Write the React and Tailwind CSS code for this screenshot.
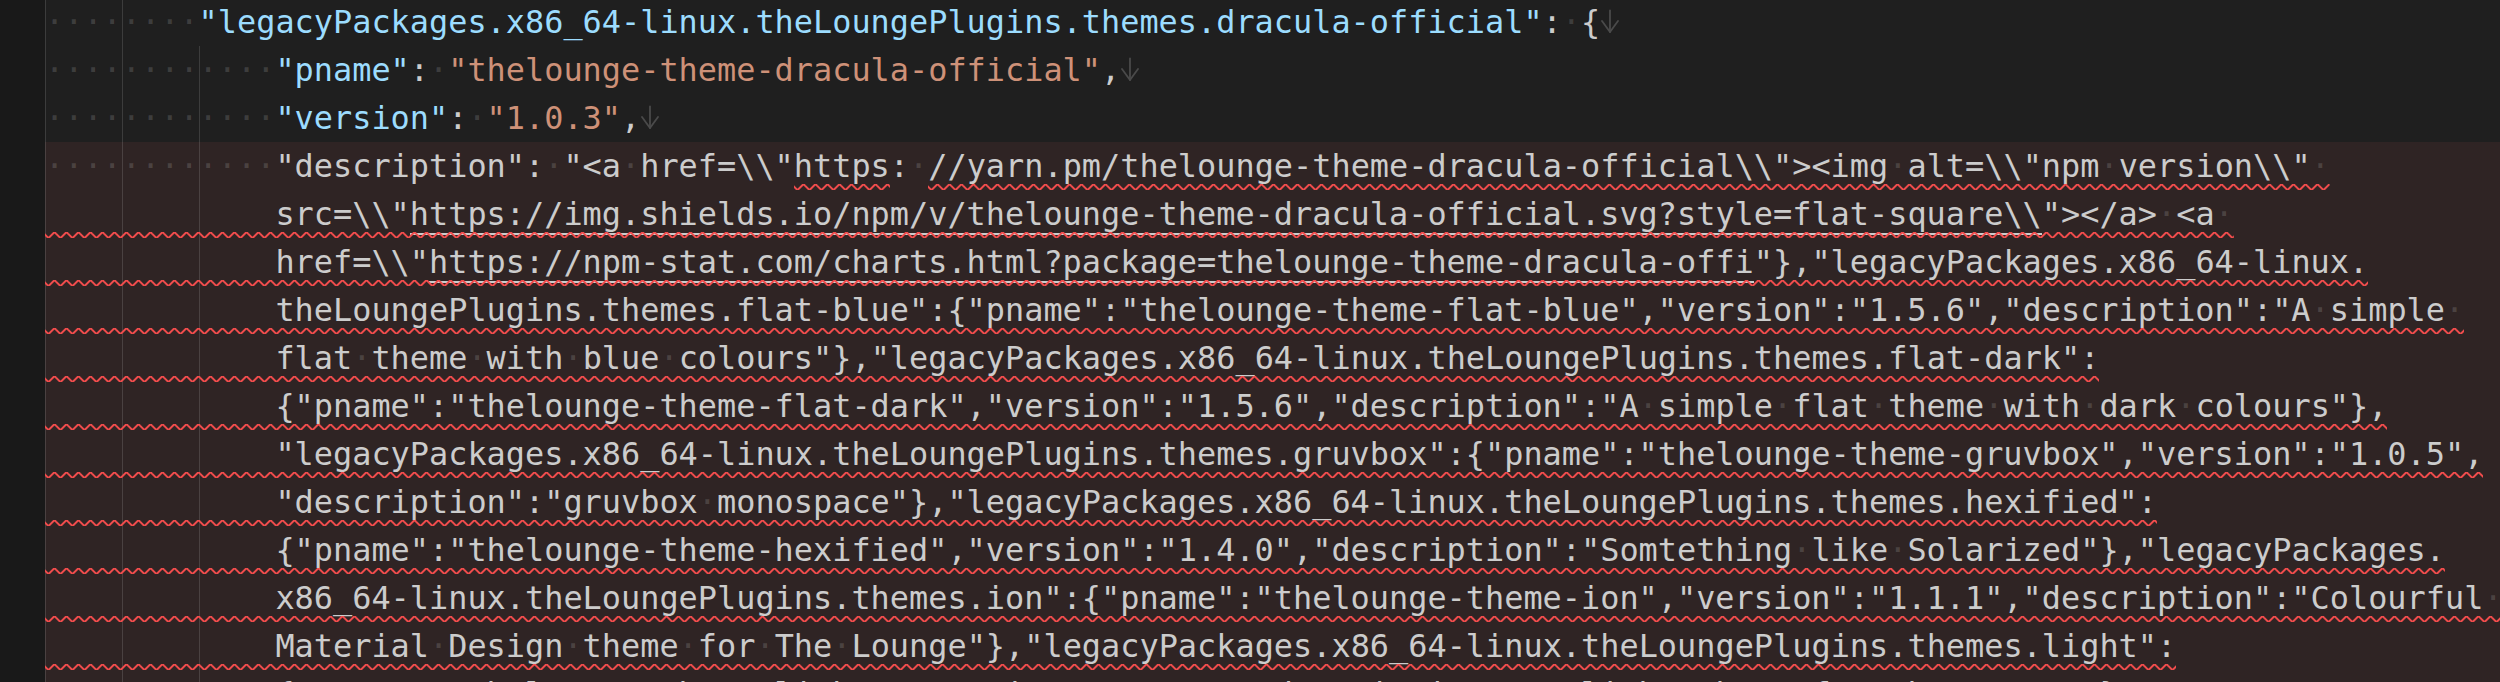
import React from "react";

const W = 19.2;
const WS = "text-[#e3e4e229]";
const FG = "text-[#cccccc]";
const KEY = "text-[#9cdcfe]";
const STR = "text-[#ce9178]";

function T({ s, c = FG, u = false }) {
  const parts = s.split(" ");
  const out = [];
  parts.forEach((p, i) => {
    if (i > 0) out.push(<span key={"d" + i} className={WS}>·</span>);
    if (p) out.push(<span key={"p" + i}>{p}</span>);
  });
  return <span className={c + (u ? " border-b-2 border-[#cccccc]" : "")}>{out}</span>;
}

function Eol() {
  return (
    <svg className="inline-block h-[48px] w-[19.2px] align-top" viewBox="0 0 19.2 48">
      <g fill="none" stroke="#4a4a4a" strokeWidth="1.8" strokeLinecap="round" strokeLinejoin="round">
        <path d="M10 12.5 V34" />
        <path d="M2 23 L10 34 L18 23" />
      </g>
    </svg>
  );
}

function Indent({ n, dots }) {
  const blocks = [];
  for (let i = 0; i < n; i++) {
    blocks.push(
      <span
        key={i}
        className={"inline-block h-[48px] w-[76.8px] align-top shadow-[inset_1px_0_0_0_#ffffff22] " + WS}
      >
        {dots ? "····" : "    "}
      </span>
    );
  }
  return <>{blocks}</>;
}

function Squiggle({ from, to, id }) {
  return (
    <svg
      className="pointer-events-none absolute bottom-0 h-[6px]"
      style={{ left: from * W, width: (to - from) * W }}
    >
      <defs>
        <pattern id={"sq" + id} width="12" height="6" patternUnits="userSpaceOnUse">
          <g fill="#f14c4c" transform="scale(2)">
            <polygon points="5.5,0 2.5,3 1.1,3 4.1,0" />
            <polygon points="4,0 6,2 6,0.6 5.4,0" />
            <polygon points="0,2 1,3 2.4,3 0,0.6" />
          </g>
        </pattern>
      </defs>
      <rect width="100%" height="100%" fill={"url(#sq" + id + ")"} />
    </svg>
  );
}

function Line({ children, err, sq = [], id }) {
  return (
    <div className={"relative h-[48px] leading-[48px] whitespace-pre " + (err ? "bg-[#2f2424]" : "")}>
      {children}
      {sq.map((r, i) => (
        <Squiggle key={i} from={r[0]} to={r[1]} id={id + "_" + i} />
      ))}
    </div>
  );
}

const wrapped = [
  [
    { s: String.raw`src=\\"` },
    { s: String.raw`https://img.shields.io/npm/v/thelounge-theme-dracula-official.svg?style=flat-square\\`, u: true },
    { s: String.raw`"></a> <a ` },
  ],
  [
    { s: String.raw`href=\\"` },
    { s: String.raw`https://npm-stat.com/charts.html?package=thelounge-theme-dracula-offi`, u: true },
    { s: String.raw`"},"legacyPackages.x86_64-linux.` },
  ],
  [{ s: String.raw`theLoungePlugins.themes.flat-blue":{"pname":"thelounge-theme-flat-blue","version":"1.5.6","description":"A simple ` }],
  [{ s: String.raw`flat theme with blue colours"},"legacyPackages.x86_64-linux.theLoungePlugins.themes.flat-dark":` }],
  [{ s: String.raw`{"pname":"thelounge-theme-flat-dark","version":"1.5.6","description":"A simple flat theme with dark colours"},` }],
  [{ s: String.raw`"legacyPackages.x86_64-linux.theLoungePlugins.themes.gruvbox":{"pname":"thelounge-theme-gruvbox","version":"1.0.5",` }],
  [{ s: String.raw`"description":"gruvbox monospace"},"legacyPackages.x86_64-linux.theLoungePlugins.themes.hexified":` }],
  [{ s: String.raw`{"pname":"thelounge-theme-hexified","version":"1.4.0","description":"Somtething like Solarized"},"legacyPackages.` }],
  [{ s: String.raw`x86_64-linux.theLoungePlugins.themes.ion":{"pname":"thelounge-theme-ion","version":"1.1.1","description":"Colourful ` }],
  [{ s: String.raw`Material Design theme for The Lounge"},"legacyPackages.x86_64-linux.theLoungePlugins.themes.light":` }],
  [{ s: String.raw`{"pname":"thelounge-theme-light","version":"1.0.1","description":"A light theme for The Lounge"},` }],
];

export default function App() {
  return (
    <div className="flex h-[682px] w-[2500px] overflow-hidden bg-[#1f1f1f] font-['DejaVu_Sans_Mono',monospace] text-[31.9px]">
      <div className="h-full w-[45px] shrink-0 bg-[#191919]" />
      <div className="flex-1 overflow-hidden">
        <div className="mt-[-2.3px]">
          <Line id="l1">
            <Indent n={2} dots />
            <T s={String.raw`"legacyPackages.x86_64-linux.theLoungePlugins.themes.dracula-official"`} c={KEY} />
            <T s=": {" />
            <Eol />
          </Line>
          <Line id="l2">
            <Indent n={3} dots />
            <T s={`"pname"`} c={KEY} />
            <T s=": " />
            <T s={`"thelounge-theme-dracula-official"`} c={STR} />
            <T s="," />
            <Eol />
          </Line>
          <Line id="l3">
            <Indent n={3} dots />
            <T s={`"version"`} c={KEY} />
            <T s=": " />
            <T s={`"1.0.3"`} c={STR} />
            <T s="," />
            <Eol />
          </Line>
          <Line id="l4" err sq={[[39, 44], [46, 119]]}>
            <Indent n={3} dots />
            <T s={String.raw`"description": "<a href=\\"https: //yarn.pm/thelounge-theme-dracula-official\\"><img alt=\\"npm version\\" `} />
          </Line>
          {wrapped.map((toks, i) => {
            const len = toks.reduce((a, t) => a + t.s.length, 0);
            return (
              <Line key={i} id={"w" + i} err sq={[[0, 12 + len]]}>
                <Indent n={3} />
                {toks.map((t, j) => (
                  <T key={j} s={t.s} u={t.u} />
                ))}
              </Line>
            );
          })}
        </div>
      </div>
    </div>
  );
}
